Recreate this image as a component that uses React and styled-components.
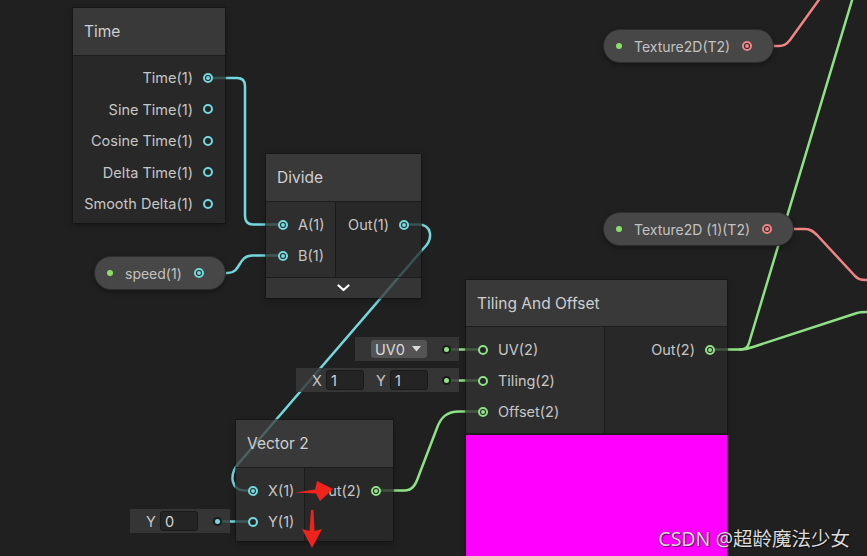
import React from 'react'
import styled, { createGlobalStyle } from 'styled-components'

const CYAN = '#74d9df'
const GREEN = '#8fe186'
const PINK = '#f08585'

const GlobalStyle = createGlobalStyle`
  html, body {
    margin: 0;
    padding: 0;
    background: #202020;
  }
  * {
    box-sizing: border-box;
  }
`

const Canvas = styled.div`
  position: relative;
  width: 867px;
  height: 556px;
  overflow: hidden;
  background: #202020;
  font-family: 'Inter', 'Noto Sans', sans-serif;
  font-size: 14.5px;
  color: #c6c6c6;
`

const Layer = styled.svg`
  position: absolute;
  left: 0;
  top: 0;
  overflow: visible;
  pointer-events: none;
`

const Node = styled.div`
  position: absolute;
  left: ${(p) => p.$x}px;
  top: ${(p) => p.$y}px;
  width: ${(p) => p.$w}px;
  display: flex;
  flex-direction: column;
  box-shadow: 0 0 0 1px rgba(18, 18, 18, 0.55), 0 2px 6px rgba(0, 0, 0, 0.35);
`

const Header = styled.div`
  height: ${(p) => p.$h || 48}px;
  display: flex;
  align-items: center;
  padding-left: 11px;
  background: rgba(64, 64, 64, 0.78);
  border-bottom: 1px solid rgba(22, 22, 22, 0.8);
  font-size: 15.5px;
  color: #cfcfcf;
`

const Body = styled.div`
  display: flex;
  height: ${(p) => p.$h}px;
`

const Column = styled.div`
  width: ${(p) => (p.$w ? `${p.$w}px` : 'auto')};
  flex: ${(p) => (p.$w ? 'none' : '1')};
  display: flex;
  flex-direction: column;
  padding-top: ${(p) => p.$pt || 7}px;
  background: ${(p) =>
    p.$tone === 'in' ? 'rgba(50, 50, 50, 0.78)' : 'rgba(42, 42, 42, 0.78)'};
  border-right: ${(p) =>
    p.$tone === 'in' ? '1px solid rgba(24, 24, 24, 0.85)' : 'none'};
`

const Row = styled.div`
  height: ${(p) => p.$h || 31}px;
  display: flex;
  align-items: center;
  gap: 10px;
  justify-content: ${(p) => (p.$side === 'out' ? 'flex-end' : 'flex-start')};
  padding: ${(p) => (p.$side === 'out' ? '0 12px 0 0' : '0 0 0 12px')};
  white-space: nowrap;
`

const Ring = styled.span`
  flex: none;
  width: 10px;
  height: 10px;
  border-radius: 50%;
  border: 2px solid ${(p) => p.$c};
  background: #262626;
  display: flex;
  align-items: center;
  justify-content: center;

  &::after {
    content: '';
    width: 4px;
    height: 4px;
    border-radius: 50%;
    background: ${(p) => (p.$filled ? p.$c : 'transparent')};
  }
`

const Footer = styled.div`
  height: 21px;
  display: flex;
  align-items: center;
  justify-content: center;
  background: rgba(59, 59, 59, 0.78);
  border-top: 1px solid rgba(22, 22, 22, 0.8);
`

const Preview = styled.div`
  height: 260px;
  background: #ff00ff;
  border-top: 2px solid #1c1c1c;
`

const Pill = styled.div`
  position: absolute;
  left: ${(p) => p.$x}px;
  top: ${(p) => p.$y}px;
  height: 34px;
  display: flex;
  align-items: center;
  gap: 12px;
  padding: 0 21px 0 12px;
  border-radius: 17px;
  background: #474747;
  border: 1px solid #2e2e2e;
  box-shadow: 0 2px 5px rgba(0, 0, 0, 0.35);
  color: #c2c2c2;
  font-size: 14px;
  white-space: nowrap;
`

const ExposeDot = styled.span`
  width: 6px;
  height: 6px;
  border-radius: 50%;
  background: #8ae066;
`

const Field = styled.div`
  position: absolute;
  left: ${(p) => p.$x}px;
  top: ${(p) => p.$y}px;
  width: ${(p) => p.$w}px;
  height: 24px;
  display: flex;
  align-items: center;
  padding: 0 8px 0 16px;
  background: rgba(58, 58, 58, 0.85);
  color: #c6c6c6;
`

const FieldLabel = styled.span`
  width: 8px;
  margin-right: 6px;
  text-align: center;
`

const NumBox = styled.span`
  width: 38px;
  height: 20px;
  margin-right: 12px;
  display: flex;
  align-items: center;
  padding-left: 4px;
  background: #242424;
  border: 1px solid #191919;
  border-radius: 3px;
  color: #d4d4d4;
`

const Dropdown = styled.span`
  width: 56px;
  height: 18px;
  display: flex;
  align-items: center;
  justify-content: space-between;
  padding: 0 6px 0 4px;
  background: #545454;
  border-radius: 3px;
  color: #dadada;
`

const FieldDot = styled.span`
  margin-left: auto;
  width: 9px;
  height: 9px;
  border-radius: 50%;
  background: #1b1b1b;
  display: flex;
  align-items: center;
  justify-content: center;

  &::after {
    content: '';
    width: 5px;
    height: 5px;
    border-radius: 50%;
    background: ${(p) => p.$c};
  }
`

const Watermark = styled.div`
  position: absolute;
  right: 17px;
  top: 523px;
  font-family: 'Noto Sans', 'Noto Sans CJK SC', sans-serif;
  font-size: 19.5px;
  color: rgba(242, 242, 242, 0.92);
  text-shadow: 0 0 1px rgba(0, 0, 0, 0.8), 1px 1px 1px rgba(0, 0, 0, 0.5);
  white-space: nowrap;
`

const edges = [
  { c: CYAN, d: 'M208,78 H237 Q245,78 245,86 V216 Q245,224.5 253,224.5 H283' },
  { c: CYAN, d: 'M197,273 H228 C241,273 238,255.5 252,255.5 H283' },
  {
    c: CYAN,
    d: 'M404,224.5 H418 C432,224.5 434,239 423,249 L238,464 C229,475 231,490.5 245,490.5 H253',
  },
  { c: GREEN, d: 'M446.5,349.5 H483' },
  { c: GREEN, d: 'M446.5,380.5 H483' },
  { c: CYAN, d: 'M217.5,521.5 H253' },
  {
    c: GREEN,
    d: 'M376,490.5 H404 C413,490.5 416,484 419,475 L437,428 C441,417 447,411.5 459,411.5 H483',
  },
  { c: GREEN, d: 'M710,349.5 H740 C746,349.5 748,347 749,343 L853,-3' },
  {
    c: GREEN,
    d: 'M740,349.5 C746,349.5 749,348.5 753,347 L857,313 C860,312 862,312 870,312',
  },
  { c: PINK, d: 'M747,46 H779 C784,46 787,44 790,40 L826,-10' },
  {
    c: PINK,
    d: 'M769,229 H805 C811,229 814,232 817,235 L855,276 C858,279 860,280 866,280 H870',
  },
]

function InRow({ label, c, filled = true }) {
  return (
    <Row $side="in">
      <Ring $c={c} $filled={filled} />
      <span>{label}</span>
    </Row>
  )
}

function OutRow({ label, c, filled = true, h }) {
  return (
    <Row $side="out" $h={h}>
      <span>{label}</span>
      <Ring $c={c} $filled={filled} />
    </Row>
  )
}

function Chevron() {
  return (
    <svg width="13" height="8" viewBox="0 0 13 8">
      <polyline
        points="1.5,1.5 6.5,6 11.5,1.5"
        fill="none"
        stroke="#ffffff"
        strokeWidth="2.2"
        strokeLinecap="round"
        strokeLinejoin="round"
      />
    </svg>
  )
}

function Caret() {
  return (
    <svg width="9" height="6" viewBox="0 0 9 6">
      <polygon points="0,0 9,0 4.5,5.5" fill="#dadada" />
    </svg>
  )
}

export default function App() {
  return (
    <Canvas>
      <GlobalStyle />
      <Layer width="867" height="556">
        {edges.map((e, i) => (
          <path
            key={i}
            d={e.d}
            fill="none"
            stroke={e.c}
            strokeWidth="2.5"
            strokeLinecap="round"
            strokeLinejoin="round"
          />
        ))}
      </Layer>

      <Node $x={73} $y={8} $w={152}>
        <Header>Time</Header>
        <Body $h={167}>
          <Column $tone="out" $pt={6}>
            <OutRow label="Time(1)" c={CYAN} h={31.5} />
            <OutRow label="Sine Time(1)" c={CYAN} filled={false} h={31.5} />
            <OutRow label="Cosine Time(1)" c={CYAN} filled={false} h={31.5} />
            <OutRow label="Delta Time(1)" c={CYAN} filled={false} h={31.5} />
            <OutRow label="Smooth Delta(1)" c={CYAN} filled={false} h={31.5} />
          </Column>
        </Body>
      </Node>

      <Node $x={266} $y={154} $w={155}>
        <Header>Divide</Header>
        <Body $h={75}>
          <Column $tone="in" $w={70}>
            <InRow label="A(1)" c={CYAN} />
            <InRow label="B(1)" c={CYAN} />
          </Column>
          <Column $tone="out">
            <OutRow label="Out(1)" c={CYAN} />
          </Column>
        </Body>
        <Footer>
          <Chevron />
        </Footer>
      </Node>

      <Pill $x={94} $y={256}>
        <ExposeDot />
        <span>speed(1)</span>
        <Ring $c={CYAN} $filled />
      </Pill>

      <Pill $x={603} $y={29}>
        <ExposeDot />
        <span>Texture2D(T2)</span>
        <Ring $c={PINK} $filled />
      </Pill>

      <Pill $x={603} $y={212}>
        <ExposeDot />
        <span>Texture2D (1)(T2)</span>
        <Ring $c={PINK} $filled />
      </Pill>

      <Node $x={466} $y={280} $w={261}>
        <Header $h={47}>Tiling And Offset</Header>
        <Body $h={106}>
          <Column $tone="in" $w={139}>
            <InRow label="UV(2)" c={GREEN} filled={false} />
            <InRow label="Tiling(2)" c={GREEN} filled={false} />
            <InRow label="Offset(2)" c={GREEN} />
          </Column>
          <Column $tone="out">
            <OutRow label="Out(2)" c={GREEN} />
          </Column>
        </Body>
        <Preview />
      </Node>

      <Field $x={355} $y={337} $w={104}>
        <Dropdown>
          <span>UV0</span>
          <Caret />
        </Dropdown>
        <FieldDot $c={GREEN} />
      </Field>

      <Field $x={296} $y={368} $w={163}>
        <FieldLabel>X</FieldLabel>
        <NumBox>1</NumBox>
        <FieldLabel>Y</FieldLabel>
        <NumBox>1</NumBox>
        <FieldDot $c={GREEN} />
      </Field>

      <Node $x={236} $y={420} $w={157}>
        <Header>Vector 2</Header>
        <Body $h={73}>
          <Column $tone="in" $w={69}>
            <InRow label="X(1)" c={CYAN} />
            <InRow label="Y(1)" c={CYAN} filled={false} />
          </Column>
          <Column $tone="out">
            <OutRow label="Out(2)" c={GREEN} />
          </Column>
        </Body>
      </Node>

      <Field $x={130} $y={509} $w={100}>
        <FieldLabel>Y</FieldLabel>
        <NumBox>0</NumBox>
        <FieldDot $c={CYAN} />
      </Field>

      <Layer width="867" height="556">
        <polygon
          points="295,492.5 315,489.5 317,481 333,489 320,501 316,493.5"
          fill="#f0231c"
        />
        <polygon
          points="311,510 313.5,510 314.5,531 322,529 312,548 302,529 309.5,531"
          fill="#f0231c"
        />
      </Layer>

      <Watermark>CSDN @超龄魔法少女</Watermark>
    </Canvas>
  )
}
